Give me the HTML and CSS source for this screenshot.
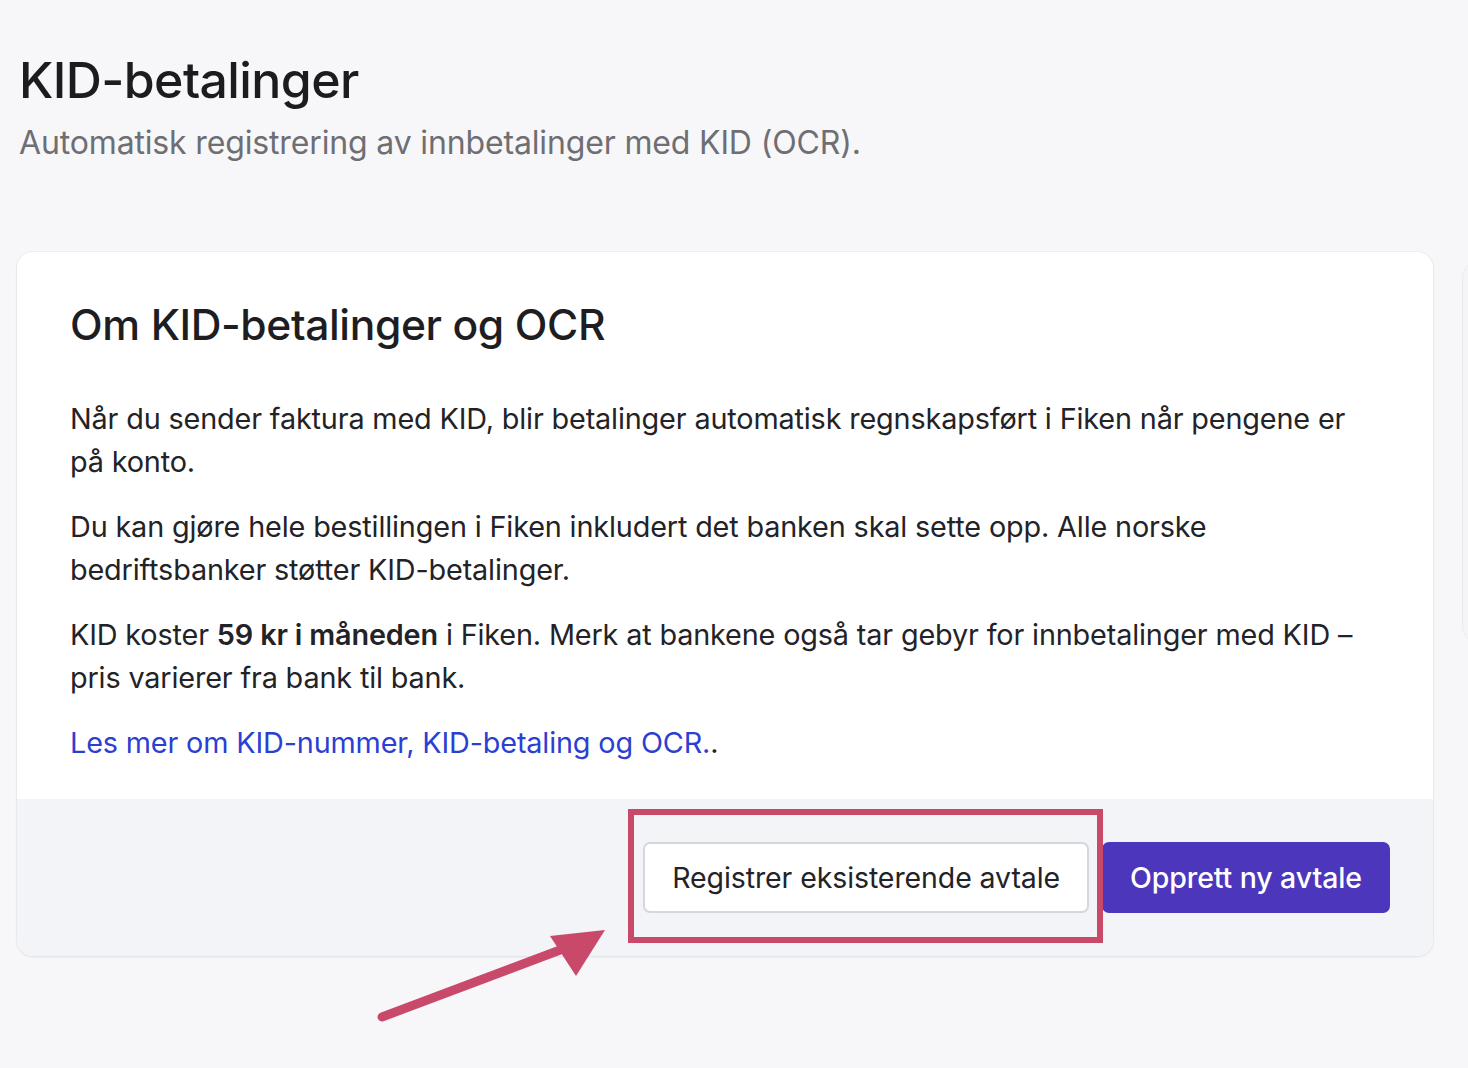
FILE: index.html
```html
<!DOCTYPE html>
<html lang="no">
<head>
<meta charset="utf-8">
<title>KID-betalinger</title>
<link rel="stylesheet" href="styles.css">
</head>
<body>
<div class="page">
  <header class="page-head">
    <h1 class="page-title">KID-betalinger</h1>
    <p class="page-sub">Automatisk registrering av innbetalinger med KID (OCR).</p>
  </header>
  <div class="row">
    <section class="card">
      <div class="card-body">
        <h2 class="card-title">Om KID-betalinger og OCR</h2>
        <p class="text">Når du sender faktura med KID, blir betalinger automatisk regnskapsført i Fiken når pengene er på konto.</p>
        <p class="text">Du kan gjøre hele bestillingen i Fiken inkludert det banken skal sette opp. Alle norske bedriftsbanker støtter KID-betalinger.</p>
        <p class="text">KID koster <strong>59 kr i måneden</strong> i Fiken. Merk at bankene også tar gebyr for innbetalinger med KID – pris varierer fra bank til bank.</p>
        <p class="text"><a class="link" href="#">Les mer om KID-nummer, KID-betaling og OCR.</a>.</p>
      </div>
      <div class="card-foot">
        <button class="btn btn-secondary">Registrer eksisterende avtale</button>
        <button class="btn btn-primary">Opprett ny avtale</button>
      </div>
    </section>
    <aside class="side-card"></aside>
  </div>
  <div class="highlight"></div>
  <svg class="arrow" width="260" height="120" viewBox="0 0 260 120">
    <line x1="6" y1="107" x2="200" y2="34" stroke="#c9496a" stroke-width="9" stroke-linecap="round"/>
    <polygon points="229,20 174,26 200,66" fill="#c9496a"/>
  </svg>
</div>
</body>
</html>
```
FILE: styles.css
```css
* { box-sizing: border-box; }
html, body { margin: 0; padding: 0; }
body {
  background: #f7f7f9;
  font-family: Inter, "Noto Sans", "Liberation Sans", sans-serif;
  color: #222226;
  width: 1468px;
  height: 1068px;
  overflow: hidden;
}
.page {
  position: relative;
  padding: 52px 0 0 17px;
  height: 1068px;
  overflow: hidden;
}
.page-head { padding-left: 2px; }
.page-title {
  margin: 0;
  font-size: 50px;
  font-weight: 500;
  line-height: 56px;
  letter-spacing: -0.6px;
  color: #1c1c20;
}
.page-sub {
  margin: 15px 0 0;
  font-size: 32px;
  line-height: 40px;
  color: #6e6e73;
  letter-spacing: -0.15px;
}
.row {
  display: flex;
  gap: 30px;
  align-items: flex-start;
  margin-top: 89px;
}
.card {
  flex: 0 0 1416px;
  background: #fff;
  border-radius: 16px;
  box-shadow: 0 1px 3px rgba(30, 30, 50, 0.08), 0 0 0 1px rgba(30, 30, 50, 0.03);
  overflow: hidden;
}
.card-body {
  padding: 47px 53px 35px;
}
.card-title {
  margin: 0 0 46px;
  font-size: 42.6px;
  font-weight: 500;
  line-height: 52px;
  letter-spacing: -0.4px;
  color: #1e1e22;
}
.text {
  margin: 0 0 22px;
  font-size: 28.8px;
  line-height: 43px;
  color: #232327;
  letter-spacing: -0.15px;
}
.text:last-child { margin-bottom: 0; }
.text strong { font-weight: 600; }
.link {
  color: #2d3fd0;
  text-decoration: none;
}
.card-foot {
  background: #f3f4f7;
  display: flex;
  justify-content: flex-end;
  align-items: center;
  gap: 13px;
  padding: 43px 43px 43px;
}
.btn {
  font-family: inherit;
  font-size: 28.5px;
  height: 71px;
  border-radius: 7px;
  cursor: pointer;
  letter-spacing: -0.1px;
}
.btn-secondary {
  padding: 0 27px;
  background: #fff;
  color: #232327;
  border: 2px solid #d6d7dc;
}
.btn-primary {
  padding: 0 26px;
  background: #4c36bb;
  color: #fff;
  border: 2px solid #4c36bb;
  font-weight: 500;
}
.side-card {
  flex: 0 0 300px;
  height: 380px;
  margin-top: 10px;
  background: #f5f5f8;
  border-radius: 16px;
  box-shadow: 0 0 0 1px rgba(30, 30, 50, 0.05);
}
.highlight {
  position: absolute;
  left: 628px;
  top: 809px;
  width: 475px;
  height: 134px;
  border: 6px solid #c9496a;
  pointer-events: none;
}
.arrow {
  position: absolute;
  left: 376px;
  top: 910px;
  pointer-events: none;
}
```
